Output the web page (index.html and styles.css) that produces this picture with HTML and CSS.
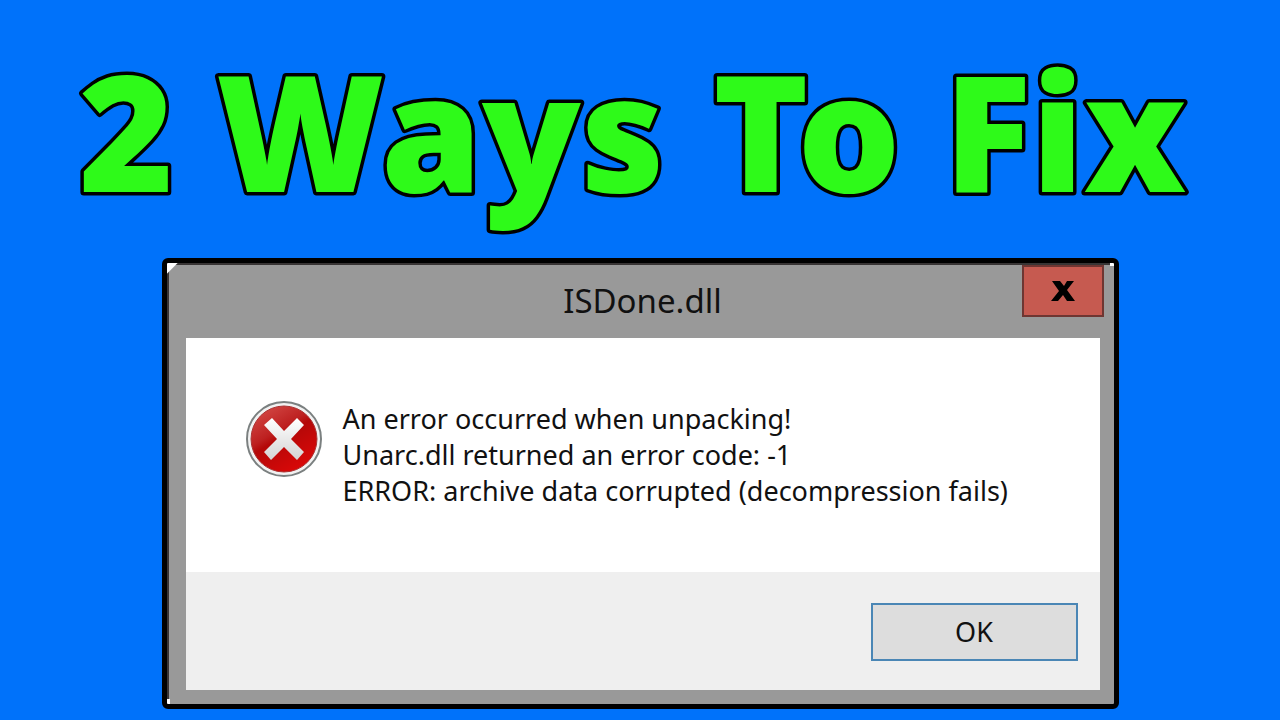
FILE: index.html
```
<!DOCTYPE html>
<html lang="en">
<head>
  <meta charset="UTF-8" />
  <meta name="viewport" content="width=device-width, initial-scale=1.0" />
  <title>2 Ways To Fix ISDone.dll</title>
  <link rel="stylesheet" href="styles.css">
</head>
<body>
  <h1 class="headline">
    <svg class="headline-art" viewBox="0 0 1280 246">
      <text y="192">
        <tspan x="79">2</tspan>
        <tspan x="216">Ways</tspan>
        <tspan x="713">To</tspan>
        <tspan x="944">Fix</tspan>
      </text>
    </svg>
  </h1>

  <div class="dialog" role="alertdialog" aria-labelledby="dialog-title" aria-describedby="dialog-text">
    <div class="titlebar">
      <h2 class="title" id="dialog-title">ISDone.dll</h2>
      <button class="close" type="button" aria-label="Close">
        <svg width="24" height="20" viewBox="0 0 24 20">
          <path d="M1 0h8l4 5 3-5h7l-7 9 8 11h-8l-4-6-5 6H0l8-10z" />
        </svg>
      </button>
    </div>

    <div class="content">
      <svg class="error-icon" width="78" height="78" viewBox="0 0 78 78" aria-hidden="true">
        <defs>
          <linearGradient id="red" x1="0" y1="0" x2="0.600" y2="1">
            <stop offset="0" stop-color="#d9534f" />
            <stop offset="0.450" stop-color="#bd2020" />
            <stop offset="0.550" stop-color="#b40808" />
            <stop offset="1" stop-color="#d80808" />
          </linearGradient>
          <linearGradient id="cross" x1="0" y1="0" x2="0" y2="1">
            <stop offset="0" stop-color="#fff" />
            <stop offset="1" stop-color="#d4d4d4" />
          </linearGradient>
        </defs>
        <circle cx="38" cy="38" r="37" fill="#f2f2f2" stroke="#7b8080" stroke-width="2" />
        <circle cx="38" cy="38" r="33" fill="url(#red)" stroke="#a33" />
        <path d="M26 17l12 13 13-13 7 7-13 14 13 13-7 8-13-13-13 13-7-8 13-13-13-14z" fill="url(#cross)" />
      </svg>
      <p class="message" id="dialog-text">
        An error occurred when unpacking!<br>
        Unarc.dll returned an error code: -1<br>
        ERROR: archive data corrupted (decompression fails)
      </p>
    </div>

    <div class="actions">
      <button class="ok" type="button">OK</button>
    </div>
  </div>
</body>
</html>
```
FILE: styles.css
```
* {
  box-sizing: border-box;
}
body {
  margin: 0;
  background: #0072fa;
  font-family: "Noto Sans", "Open Sans", sans-serif;
  color: #111;
}
.headline {
  margin: 0;
}
.headline-art {
  display: block;
  width: 100%;
  font-family: "Noto Sans", sans-serif;
  font-size: 162px;
  font-weight: 900;
  fill: #2efa19;
  stroke: #000;
  stroke-width: 7px;
  stroke-linejoin: round;
  paint-order: stroke;
}
.dialog {
  width: 92%;
  max-width: 957px;
  margin: 12px auto 0;
  padding: 0 14px 14px 19px;
  border: 5px solid #000;
  border-radius: 6px;
  /* light window corners, then the dark top and left edges */
  background:
    linear-gradient(135deg, #fff 7px, transparent 8px) left top / 12px 12px no-repeat,
    linear-gradient(#fff, #fff) right top / 4px 3px no-repeat,
    linear-gradient(#fff, #fff) left bottom / 3px 5px no-repeat,
    linear-gradient(#383434, #383434) left top / 100% 2px no-repeat,
    linear-gradient(#383434, #383434) left top / 2px 100% no-repeat,
    #999;
}
.titlebar {
  position: relative;
  display: flex;
  justify-content: center;
  align-items: center;
  height: 75px;
}
.title {
  margin: 0;
  font-size: 33px;
  font-weight: 400;
  line-height: 40px;
}
.close {
  position: absolute;
  top: 2px;
  right: -4px;
  display: flex;
  justify-content: center;
  align-items: center;
  width: 82px;
  height: 52px;
  padding: 0;
  border: 2px solid #6e3632;
  background: #c65a50;
}
.content {
  display: flex;
  align-items: flex-start;
  gap: 19px;
  padding: 63px 60px;
  background: #fff;
}
.error-icon {
  flex: none;
}
.message {
  margin: 0;
  font-size: 27px;
  line-height: 36px;
}
.actions {
  display: flex;
  justify-content: flex-end;
  padding: 31px 22px 29px;
  background: #efefef;
}
.ok {
  width: 207px;
  height: 58px;
  padding: 0 0 2px;
  border: 2px solid #4a86b5;
  background: #ddd;
  font: inherit;
  font-size: 27px;
  color: #111;
}
```
